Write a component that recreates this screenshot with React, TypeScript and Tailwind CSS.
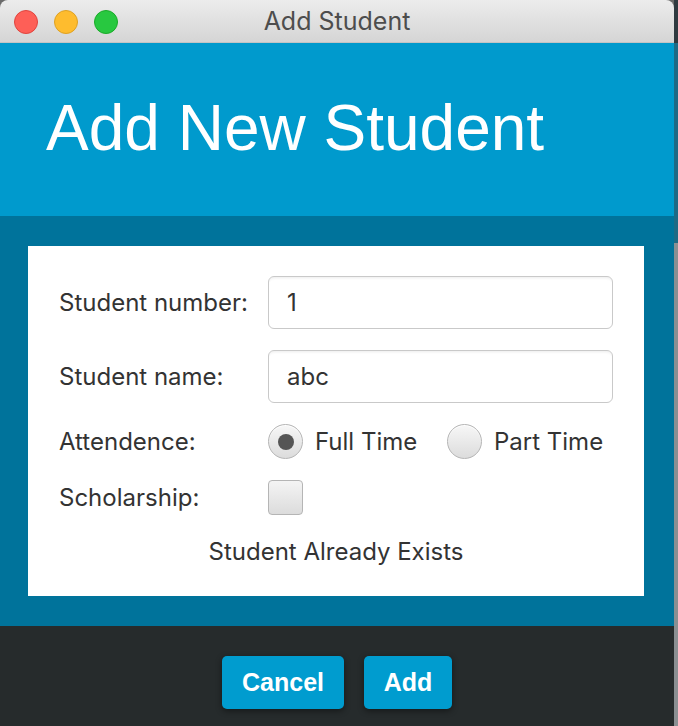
import React from "react";

const sysFont = { fontFamily: "Inter, 'Liberation Sans', sans-serif" };

function Radio({ checked, label, className }: { checked?: boolean; label: string; className?: string }) {
  return (
    <div className={"flex items-center gap-[12px] " + (className ?? "")}>
      <div className="w-[35px] h-[35px] rounded-full border border-[#b5b5b5] bg-gradient-to-b from-[#f7f7f7] to-[#dcdcdc] shadow-[inset_0_1px_0_#ffffff] flex items-center justify-center">
        {checked && <div className="w-[16px] h-[16px] rounded-full bg-[#555555]" />}
      </div>
      <span>{label}</span>
    </div>
  );
}

function Field({ value }: { value: string }) {
  return (
    <div className="w-[345px] h-[53px] rounded-[6px] border border-[#c9c9c9] bg-white shadow-[inset_0_3px_3px_-2px_rgba(0,0,0,0.08)] flex items-center pl-[18px]">
      {value}
    </div>
  );
}

export default function App() {
  return (
    <div className="flex w-[678px] h-[726px] bg-[#6b6b6b]" style={sysFont}>
      <div className="w-[674px] h-full flex flex-col overflow-hidden rounded-tr-[8px] rounded-tl-[8px]">
        {/* Title bar */}
        <div className="relative h-[43px] shrink-0 bg-gradient-to-b from-[#ececec] to-[#d5d5d5] flex items-center justify-center border-b border-[#c4c4c4]">
          <div className="absolute left-[14px] top-[10px] flex gap-[16px]">
            <div className="w-[24px] h-[24px] rounded-full bg-[#fe5f57] border border-[#e0443e]" />
            <div className="w-[24px] h-[24px] rounded-full bg-[#febc2e] border border-[#dea123]" />
            <div className="w-[24px] h-[24px] rounded-full bg-[#28c840] border border-[#1aab29]" />
          </div>
          <span className="text-[25px] text-[#4d4d4d] leading-none">Add Student</span>
        </div>
        {/* Header */}
        <div className="h-[173px] shrink-0 bg-[#009acd] flex items-center pl-[46px]">
          <span
            className="text-white text-[64px] leading-none pb-[4px]"
            style={{ fontFamily: "'Liberation Sans', Arial, sans-serif" }}
          >
            Add New Student
          </span>
        </div>
        {/* Body */}
        <div className="flex-1 bg-[#00739b] pl-[28px] pr-[30px] py-[30px]">
          <div className="h-[350px] bg-white pt-[30px] px-[31px] text-[24px] text-[#333333] flex flex-col gap-[21px]">
            <div className="flex items-center">
              <div className="w-[209px]">Student number:</div>
              <Field value="1" />
            </div>
            <div className="flex items-center">
              <div className="w-[209px]">Student name:</div>
              <Field value="abc" />
            </div>
            <div className="flex items-center h-[35px]">
              <div className="w-[209px]">Attendence:</div>
              <div className="flex items-center">
                <Radio checked label="Full Time" className="w-[179px]" />
                <Radio label="Part Time" />
              </div>
            </div>
            <div className="flex items-center h-[35px]">
              <div className="w-[209px]">Scholarship:</div>
              <div className="w-[35px] h-[35px] rounded-[4px] border border-[#b5b5b5] bg-gradient-to-b from-[#f4f4f4] to-[#dcdcdc]" />
            </div>
            <div className="text-center leading-[28px] mt-[2px]">Student Already Exists</div>
          </div>
        </div>
        {/* Footer */}
        <div className="h-[100px] shrink-0 bg-[#262b2c] flex justify-center items-start pt-[30px] gap-[20px]">
          <button
            className="w-[122px] h-[53px] rounded-[5px] bg-[#009ccf] text-white font-bold text-[25px] shadow-[0_2px_6px_rgba(0,0,0,0.45)]"
            style={{ fontFamily: "'Liberation Sans', Arial, sans-serif" }}
          >
            Cancel
          </button>
          <button
            className="w-[88px] h-[53px] rounded-[5px] bg-[#009ccf] text-white font-bold text-[25px] shadow-[0_2px_6px_rgba(0,0,0,0.45)]"
            style={{ fontFamily: "'Liberation Sans', Arial, sans-serif" }}
          >
            Add
          </button>
        </div>
      </div>
      <div className="flex-1 flex flex-col">
        <div className="h-[43px] bg-[#2f3a40]" />
        <div className="h-[200px] bg-[#1e6a85]" />
        <div className="flex-1 bg-[#8a8f92]" />
      </div>
    </div>
  );
}
